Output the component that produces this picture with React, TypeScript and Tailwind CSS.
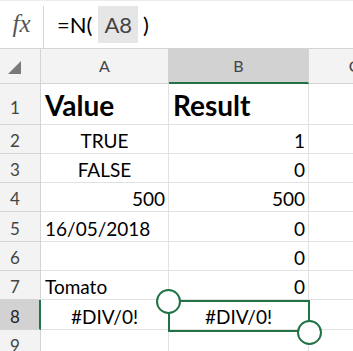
const rows = [
  { n: "1", h: "h-[41px]", a: "Value", aAlign: "left", b: "Result", bAlign: "left", bold: true },
  { n: "2", h: "h-[29px]", a: "TRUE", aAlign: "center", b: "1", bAlign: "right" },
  { n: "3", h: "h-[29px]", a: "FALSE", aAlign: "center", b: "0", bAlign: "right" },
  { n: "4", h: "h-[29px]", a: "500", aAlign: "right", b: "500", bAlign: "right" },
  { n: "5", h: "h-[30px]", a: "16/05/2018", aAlign: "left", b: "0", bAlign: "right" },
  { n: "6", h: "h-[29px]", a: "", aAlign: "left", b: "0", bAlign: "right" },
  { n: "7", h: "h-[29px]", a: "Tomato", aAlign: "left", b: "0", bAlign: "right" },
  { n: "8", h: "h-[30px]", a: "#DIV/0!", aAlign: "center", b: "#DIV/0!", bAlign: "center", active: true },
  { n: "9", h: "h-[29px]", a: "", aAlign: "left", b: "", bAlign: "left" },
];

const align = (a: string) =>
  a === "center" ? "justify-center" : a === "right" ? "justify-end pr-[3px]" : "justify-start pl-[4px]";

const Cell = ({ text, al, w, bold }: { text: string; al: string; w: string; bold?: boolean }) => (
  <div
    className={`${w} h-full shrink-0 flex items-end border-r border-b border-[#e1e1e1] ${align(al)} ${
      bold ? "pb-[5px] text-[28px] font-bold" : "pb-[3px] text-[19px]"
    } leading-none text-black whitespace-nowrap`}
  >
    {text}
  </div>
);

const Handle = ({ className }: { className: string }) => (
  <div className={`absolute w-[25px] h-[25px] rounded-full border-2 border-[#217346] bg-white ${className}`} />
);

export default function App() {
  return (
    <div className="relative w-[353px] h-[351px] overflow-hidden bg-white font-['Lato',sans-serif]">
      {/* formula bar */}
      <div className="flex h-[49px] border-b border-[#d4d4d4] border-t border-t-[#ececec]">
        <div className="w-[44px] shrink-0 flex items-center justify-center border-r border-[#d4d4d4] mt-[5px]">
          <span className="font-['Liberation_Serif',serif] italic text-[25px] text-[#555] -mt-[6px]">fx</span>
        </div>
        <div className="flex items-center pl-[13px] text-[22px] text-black leading-none">
          <span>=N(</span>
          <span className="ml-[6px] px-[6px] h-[37px] flex items-center bg-[#e6e6e6] text-[#444]">A8</span>
          <span className="ml-[5px]">)</span>
        </div>
      </div>

      {/* column headers */}
      <div className="flex h-[35px] text-[16px] text-[#444] leading-none">
        <div className="w-[41px] shrink-0 border-r border-b border-[#d4d4d4] bg-[#f3f3f3] relative">
          <svg className="absolute left-[8px] top-[12px]" width="14" height="14" viewBox="0 0 14 14">
            <polygon points="0,13 13,0 13,13" fill="#7a7a7a" />
          </svg>
        </div>
        <div className="w-[128px] shrink-0 flex items-center justify-center border-r border-b border-[#d4d4d4] bg-[#f3f3f3]">
          A
        </div>
        <div className="w-[140px] shrink-0 flex items-center justify-center border-r border-[#d4d4d4] border-b-2 border-b-[#217346] bg-[#d2d2d2]">
          B
        </div>
        <div className="w-[90px] shrink-0 flex items-center justify-center border-b border-[#d4d4d4] bg-[#f3f3f3]">
          C
        </div>
      </div>

      {/* rows */}
      {rows.map((r) => (
        <div key={r.n} className={`flex ${r.h}`}>
          <div
            className={`w-[41px] shrink-0 h-full flex items-end pl-[10px] pb-[4px] text-[17px] leading-none border-b border-[#d4d4d4] ${
              r.active
                ? "bg-[#d2d2d2] text-[#222] border-r-2 border-r-[#217346]"
                : "bg-[#f3f3f3] text-[#444] border-r border-r-[#d4d4d4]"
            } ${r.n === "1" ? "pb-[8px]" : ""}`}
          >
            {r.n}
          </div>
          <Cell text={r.a} al={r.aAlign} w="w-[128px]" bold={r.bold} />
          <Cell text={r.b} al={r.bAlign} w="w-[140px]" bold={r.bold} />
          <div className="flex-1 h-full border-b border-[#e1e1e1]" />
        </div>
      ))}

      {/* selection of B8 */}
      <div className="absolute left-[168px] top-[300px] w-[142px] h-[32px] border-2 border-[#217346]" />
      <Handle className="left-[156px] top-[289px]" />
      <Handle className="left-[297px] top-[320px]" />
    </div>
  );
}
